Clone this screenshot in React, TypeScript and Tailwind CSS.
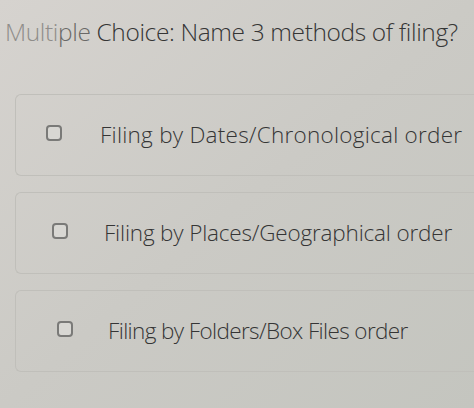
const options = [
  { label: 'Filing by Dates/Chronological order', box: 'pl-[30px] gap-[38px]', text: 'tracking-[0.25px]' },
  { label: 'Filing by Places/Geographical order', box: 'pl-[36px] gap-[36px]', text: 'tracking-[-0.18px]' },
  { label: 'Filing by Folders/Box Files order', box: 'pl-[41px] gap-[35px]', text: 'tracking-[-0.62px]' },
]

export default function App() {
  return (
    <div
      className="w-[474px] h-[408px] overflow-hidden bg-gradient-to-br from-[#d6d3cf] via-[#cbcac5] to-[#c4c5bf] text-[#353535]"
      style={{ fontFamily: '"Open Sans", "Noto Sans", sans-serif' }}
    >
      <h1 className="pl-[5px] pt-[12px] text-[24.5px] leading-[40px] font-light tracking-[-0.37px] whitespace-nowrap">
        <span className="text-[#8f8d8a]">Multi</span>
        <span className="text-[#6a6967]">ple </span>
        Choice: Name 3 methods of filing?
      </h1>

      <div className="mt-[42px] flex flex-col gap-[16px] pl-[15px]">
        {options.map((o) => (
          <div
            key={o.label}
            className={`h-[82px] flex items-center ${o.box} rounded-md border border-[#c0bfba] border-r-0 rounded-r-none`}
          >
            <span className="w-[16px] h-[16px] shrink-0 -mt-[4px] rounded-[4px] border-2 border-[#7a7a78] bg-[#d8d7d3]" />
            <span className={`text-[22.5px] leading-none font-light whitespace-nowrap ${o.text}`}>{o.label}</span>
          </div>
        ))}
      </div>
    </div>
  )
}
